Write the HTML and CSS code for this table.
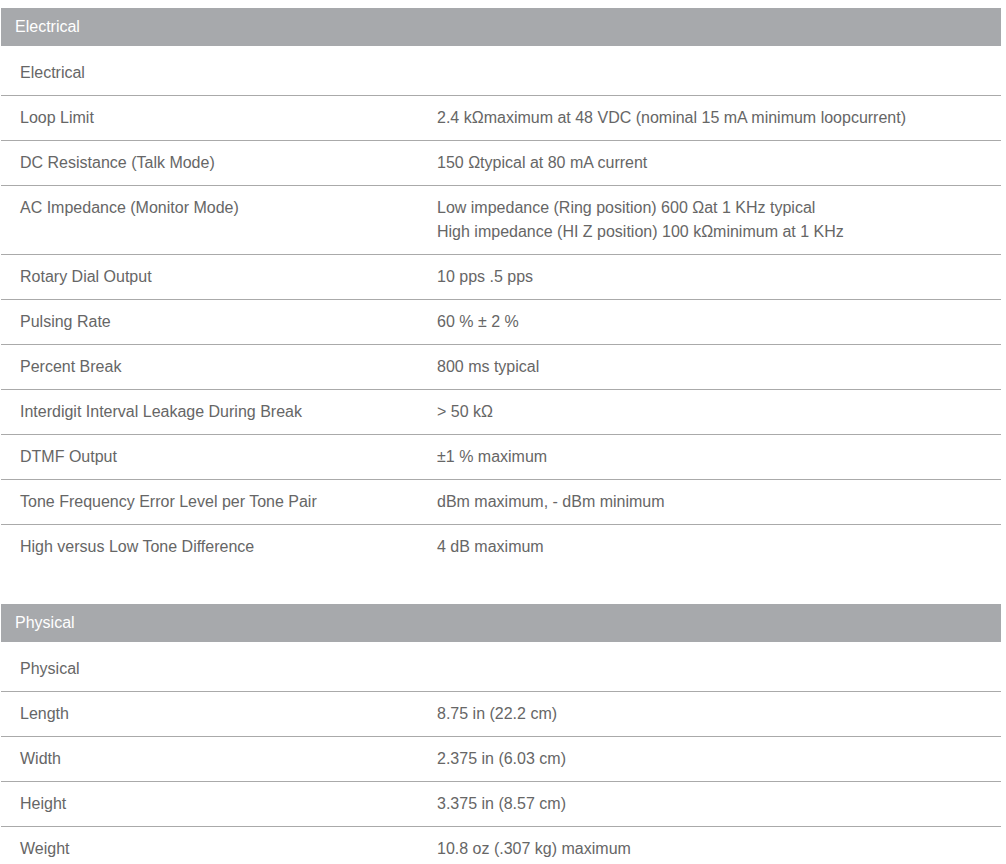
FILE: index.html
```html
<!DOCTYPE html>
<html>
<head>
<meta charset="utf-8">
<link rel="stylesheet" href="styles.css">
</head>
<body>
<div class="specs">
  <section class="group">
    <div class="group-title">Electrical</div>
    <div class="row"><div class="label">Electrical</div><div class="value"></div></div>
    <div class="row"><div class="label">Loop Limit</div><div class="value">2.4 kΩmaximum at 48 VDC (nominal 15 mA minimum loopcurrent)</div></div>
    <div class="row"><div class="label">DC Resistance (Talk Mode)</div><div class="value">150 Ωtypical at 80 mA current</div></div>
    <div class="row"><div class="label">AC Impedance (Monitor Mode)</div><div class="value">Low impedance (Ring position) 600 Ωat 1 KHz typical<br>High impedance (HI Z position) 100 kΩminimum at 1 KHz</div></div>
    <div class="row"><div class="label">Rotary Dial Output</div><div class="value">10 pps .5 pps</div></div>
    <div class="row"><div class="label">Pulsing Rate</div><div class="value">60 % ± 2 %</div></div>
    <div class="row"><div class="label">Percent Break</div><div class="value">800 ms typical</div></div>
    <div class="row"><div class="label">Interdigit Interval Leakage During Break</div><div class="value">&gt; 50 kΩ</div></div>
    <div class="row"><div class="label">DTMF Output</div><div class="value">±1 % maximum</div></div>
    <div class="row"><div class="label">Tone Frequency Error Level per Tone Pair</div><div class="value">dBm maximum, - dBm minimum</div></div>
    <div class="row"><div class="label">High versus Low Tone Difference</div><div class="value">4 dB maximum</div></div>
  </section>
  <section class="group">
    <div class="group-title">Physical</div>
    <div class="row"><div class="label">Physical</div><div class="value"></div></div>
    <div class="row"><div class="label">Length</div><div class="value">8.75 in (22.2 cm)</div></div>
    <div class="row"><div class="label">Width</div><div class="value">2.375 in (6.03 cm)</div></div>
    <div class="row"><div class="label">Height</div><div class="value">3.375 in (8.57 cm)</div></div>
    <div class="row"><div class="label">Weight</div><div class="value">10.8 oz (.307 kg) maximum</div></div>
  </section>
</div>
</body>
</html>
```
FILE: styles.css
```css
html, body {
  margin: 0;
  padding: 0;
  background: #ffffff;
}

body {
  font-family: "Liberation Sans", Arial, sans-serif;
  font-size: 16px;
  color: #666666;
}

.specs {
  width: 1000px;
  padding: 8px 0 0 1px;
}

.group {
  margin-bottom: 35px;
}

.group-title {
  background: #a7a9ac;
  color: #ffffff;
  height: 38px;
  line-height: 38px;
  padding: 0 14px;
  margin-bottom: 5px;
  font-size: 16px;
}

.row {
  display: grid;
  grid-template-columns: 417px 1fr;
  border-bottom: 1px solid #aaaaaa;
}

.row:last-child {
  border-bottom: none;
}

.label,
.value {
  padding: 10px 19px;
  line-height: 24px;
}
```
